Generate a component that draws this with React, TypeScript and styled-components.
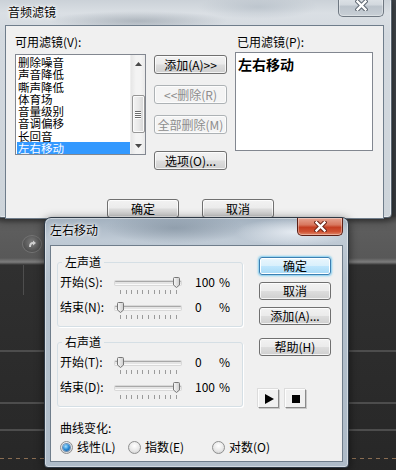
import React from "react";
import styled, { createGlobalStyle, css } from "styled-components";

const FONT = `"Noto Sans CJK SC", "Noto Sans CJK JP", "Noto Sans", sans-serif`;

const GlobalStyle = createGlobalStyle`
  html, body { margin: 0; padding: 0; }
  body { background: #2a2a2a; font-family: ${FONT}; font-size: 12px; color: #000; overflow: hidden; }
  * { box-sizing: border-box; }
`;

/* ---------- desktop ---------- */
const Desktop = styled.div`
  position: relative;
  width: 396px;
  height: 470px;
  overflow: hidden;
  background: linear-gradient(
    180deg,
    #44494e 0px,
    #3a3e42 212px,
    #3b3b3b 216px,
    #4a4a4a 218px,
    #5e5e5e 224px,
    #585858 258px,
    #7d7d7d 262px,
    #303030 265px,
    #272727 470px
  );
`;

const Stripe = styled.div<{ $y: number; $h?: number; $c: string; $dashed?: boolean }>`
  position: absolute;
  left: 0;
  right: 0;
  top: ${(p) => p.$y}px;
  height: ${(p) => p.$h ?? 2}px;
  background: ${(p) =>
    p.$dashed ? `repeating-linear-gradient(90deg, ${p.$c} 0 4px, transparent 4px 8px)` : p.$c};
`;

const VLine = styled.div<{ $x: number; $y: number; $h: number }>`
  position: absolute;
  left: ${(p) => p.$x}px;
  top: ${(p) => p.$y}px;
  width: 1px;
  height: ${(p) => p.$h}px;
  background: #4e4e4e;
`;

const Knob = styled.div`
  position: absolute;
  left: 22px;
  top: 235px;
  width: 20px;
  height: 18px;
  border-radius: 50%;
  border: 1px solid #747474;
  background: radial-gradient(circle at 50% 40%, #7c7c7c, #4d4d4d 75%);
  display: flex;
  align-items: center;
  justify-content: center;
`;

/* ---------- window chrome ---------- */
const Window = styled.div<{ $x: number; $y: number; $w: number; $h: number; $frame: number; $active?: boolean }>`
  position: absolute;
  left: ${(p) => p.$x}px;
  top: ${(p) => p.$y}px;
  width: ${(p) => p.$w}px;
  height: ${(p) => p.$h}px;
  display: flex;
  flex-direction: column;
  padding: 0 ${(p) => p.$frame}px ${(p) => p.$frame}px;
  border: 1px solid ${(p) => (p.$active ? "#2e3945" : "#59646f")};
  border-radius: 7px 7px 4px 4px;
  box-shadow: inset 0 0 0 1px rgba(255, 255, 255, 0.45), 0 2px 10px rgba(0, 0, 0, 0.55);
  background: ${(p) =>
    p.$active
      ? `radial-gradient(ellipse 60px 14px at 250px 14px, rgba(235,240,246,0.9), transparent),
         radial-gradient(ellipse 70px 16px at 130px 10px, rgba(120,135,150,0.55), transparent),
         linear-gradient(180deg, #a3b1bf 0px, #bfcad5 22px, #b3c0cc 60px, #aebbc8 100%)`
      : `radial-gradient(ellipse 90px 10px at 140px 26px, rgba(140,150,160,0.55), transparent),
         radial-gradient(ellipse 60px 12px at 260px 12px, rgba(175,185,195,0.6), transparent),
         linear-gradient(180deg, #c5ccd3 0px, #dadfe4 18px, #d3d9df 40px, #cdd4da 100%)`};
`;

const TitleBar = styled.div<{ $h: number }>`
  flex: none;
  height: ${(p) => p.$h}px;
  display: flex;
  align-items: flex-start;
  justify-content: space-between;
`;

const Title = styled.div<{ $top: number; $left: number }>`
  margin: ${(p) => p.$top}px 0 0 ${(p) => p.$left}px;
  font-size: 12px;
  line-height: 14px;
  color: #000;
  text-shadow: 0 0 5px #fff, 0 0 3px rgba(255, 255, 255, 0.9), 0 0 1px #fff;
`;

const CloseBtn = styled.div<{ $h: number; $active?: boolean }>`
  width: 46px;
  height: ${(p) => p.$h}px;
  border: 1px solid ${(p) => (p.$active ? "#5b1f15" : "#6f7882")};
  border-top: none;
  border-radius: 0 0 5px 5px;
  display: flex;
  align-items: center;
  justify-content: center;
  box-shadow: inset 0 0 0 1px rgba(255, 255, 255, 0.35);
  background: ${(p) =>
    p.$active
      ? "linear-gradient(180deg, #e6a390 0%, #d8785f 40%, #c43e22 55%, #cf5233 80%, #e08a6c 100%)"
      : "linear-gradient(180deg, #e4e8ec 0%, #d3d9df 45%, #bcc4cc 55%, #c8cfd6 100%)"};
`;

const Client = styled.div<{ $pad: string }>`
  flex: 1;
  display: flex;
  flex-direction: column;
  padding: ${(p) => p.$pad};
  background: #f0f0f0;
  border: 1px solid #6f7d8b;
`;

/* ---------- controls ---------- */
const Btn = styled.button<{ $w?: number; $h?: number; $off?: boolean; $default?: boolean }>`
  flex: none;
  width: ${(p) => p.$w ?? 73}px;
  height: ${(p) => p.$h ?? 19}px;
  padding: 0;
  margin: 0;
  display: flex;
  align-items: center;
  justify-content: center;
  font-family: ${FONT};
  font-size: 12px;
  line-height: 14px;
  color: #000;
  border: 1px solid #707070;
  border-radius: 3px;
  background: linear-gradient(180deg, #f2f2f2 0%, #ebebeb 48%, #dddddd 52%, #cfcfcf 100%);
  box-shadow: inset 0 0 0 1px rgba(255, 255, 255, 0.75);
  ${(p) =>
    p.$off &&
    css`
      color: #8d8d8d;
      border-color: #adb2b5;
      background: #f4f4f4;
      box-shadow: inset 0 0 0 1px #fcfcfc;
    `}
  ${(p) =>
    p.$default &&
    css`
      border-color: #3c7fb1;
      background: linear-gradient(180deg, #eaf6fd 0%, #d9f0fc 48%, #bee6fd 52%, #a7d9f5 100%);
      box-shadow: inset 0 0 0 1px #fff, 0 0 2px 1px rgba(80, 190, 240, 0.7);
    `}
`;

const IconBtn = styled.div`
  width: 21px;
  height: 19px;
  display: flex;
  align-items: center;
  justify-content: center;
  background: #f0f0f0;
  border: 1px solid;
  border-color: #fdfdfd #8a8a8a #8a8a8a #fdfdfd;
  box-shadow: 1px 1px 0 #c9c9c9, -1px -1px 0 #dcdcdc;
`;

const Label = styled.div<{ $indent?: number }>`
  font-size: 12px;
  line-height: 14px;
  padding-left: ${(p) => p.$indent ?? 0}px;
  white-space: nowrap;
`;

/* ---------- window 1 parts ---------- */
const TopRow = styled.div`
  display: flex;
  align-items: flex-start;
`;

const Column = styled.div<{ $ml?: number; $pt?: number }>`
  display: flex;
  flex-direction: column;
  margin-left: ${(p) => p.$ml ?? 0}px;
  padding-top: ${(p) => p.$pt ?? 0}px;
`;

const ListBox = styled.div`
  margin-top: 5px;
  width: 131px;
  height: 101px;
  display: flex;
  background: #fff;
  border: 1px solid #828790;
`;

const ListItems = styled.ul`
  flex: 1;
  margin: 0;
  padding: 1px 0 0 1px;
  list-style: none;
`;

const ListItem = styled.li<{ $selected?: boolean }>`
  height: 12.25px;
  line-height: 12.25px;
  font-size: 11.5px;
  padding-left: 1px;
  white-space: nowrap;
  color: ${(p) => (p.$selected ? "#fff" : "#000")};
  background: ${(p) => (p.$selected ? "#3399ff" : "transparent")};
`;

const ScrollBar = styled.div`
  flex: none;
  width: 15px;
  display: flex;
  flex-direction: column;
  align-items: center;
  background: linear-gradient(90deg, #e6e6e6, #f3f3f3 35%, #f3f3f3 70%, #e9e9e9);
  border-left: 1px solid #efefef;
`;

const ScrollArrow = styled.div`
  height: 17px;
  width: 100%;
  display: flex;
  align-items: center;
  justify-content: center;
`;

const ScrollTrack = styled.div`
  flex: 1;
  width: 100%;
  display: flex;
  flex-direction: column;
  align-items: center;
`;

const ScrollThumb = styled.div`
  width: 13px;
  height: 38px;
  border: 1px solid #979797;
  border-radius: 2px;
  background: linear-gradient(90deg, #f3f3f3 0%, #e8e8e8 50%, #d6d6d6 100%);
  box-shadow: inset 0 0 0 1px #fafafa;
  display: flex;
  flex-direction: column;
  align-items: center;
  justify-content: center;
  gap: 1px;
`;

const Grip = styled.span`
  width: 6px;
  height: 1px;
  background: #6c6c6c;
  box-shadow: 0 1px 0 #fff;
`;

const UsedBox = styled.div`
  margin-top: 3px;
  width: 138px;
  height: 99px;
  padding: 2px 2px;
  background: #fff;
  border: 1px solid #828790;
  font-size: 14px;
  line-height: 18px;
  font-weight: bold;
`;

const BtnStack = styled.div`
  display: flex;
  flex-direction: column;
`;

const Spacer = styled.div<{ $h: number }>`
  flex: none;
  height: ${(p) => p.$h}px;
`;

const BottomRow = styled.div`
  display: flex;
  gap: 23px;
  margin: 29px 0 0 92px;
`;

/* ---------- window 2 parts ---------- */
const MainRow = styled.div`
  display: flex;
  align-items: flex-start;
`;

const LeftCol = styled.div`
  width: 186px;
  display: flex;
  flex-direction: column;
  gap: 8px;
`;

const Group = styled.fieldset`
  margin: 0;
  min-width: 0;
  padding: 7px 0 0 2px;
  border: 1px solid #d5dfe5;
  border-radius: 3px;
  box-shadow: 1px 1px 0 #fff;
`;

const GroupLegend = styled.legend`
  margin-left: 2px;
  padding: 0 3px;
  font-size: 12px;
  line-height: 14px;
`;

const SliderRow = styled.div`
  display: grid;
  grid-template-columns: 55px 66px 14px 24px auto;
  align-items: start;
  height: 25px;
`;

const RowText = styled.span`
  font-size: 12px;
  line-height: 12px;
  white-space: nowrap;
`;

const SliderBox = styled.div`
  position: relative;
  width: 66px;
  height: 20px;
  margin-top: 1px;
`;

const SliderTrack = styled.div`
  position: absolute;
  left: 0;
  right: 0;
  top: 4px;
  height: 4px;
  border-radius: 1px;
  background: #e4e4e4;
  border-top: 1px solid #a8a8a8;
  border-bottom: 1px solid #fafafa;
  box-shadow: 0 0 0 1px #d9d9d9;
`;

const SliderTicks = styled.div`
  position: absolute;
  left: 5px;
  width: 57px;
  top: 13px;
  height: 4px;
  background: repeating-linear-gradient(90deg, #9b9b9b 0 1px, transparent 1px 5.6px);
`;

const ThumbHolder = styled.div`
  position: absolute;
  top: 0;
  width: 7px;
  height: 11px;
  display: flex;
`;

const RightCol = styled.div`
  margin-left: 16px;
  padding-top: 2px;
  display: flex;
  flex-direction: column;
`;

const PlayRow = styled.div`
  display: flex;
  gap: 6px;
  margin-left: -1px;
`;

const CurveSection = styled.div`
  margin: 13px 0 0 3px;
  display: flex;
  flex-direction: column;
  gap: 5px;
`;

const RadioRow = styled.div`
  display: grid;
  grid-template-columns: 68px 84px auto;
  align-items: center;
`;

const RadioItem = styled.label`
  display: flex;
  align-items: center;
  gap: 4px;
  font-size: 12px;
  line-height: 14px;
  white-space: nowrap;
`;

const RadioCircle = styled.span<{ $checked?: boolean }>`
  flex: none;
  width: 13px;
  height: 13px;
  border-radius: 50%;
  border: 1px solid #8e8f8f;
  background: radial-gradient(circle at 50% 35%, #ffffff 0%, #e8e8e8 55%, #c9c9c9 100%);
  display: flex;
  align-items: center;
  justify-content: center;
  &::after {
    content: "";
    display: ${(p) => (p.$checked ? "block" : "none")};
    width: 7px;
    height: 7px;
    border-radius: 50%;
    background: radial-gradient(circle at 40% 35%, #a6e1ff 0%, #2a8ad4 50%, #0c4d8f 100%);
    box-shadow: 0 0 0 1px rgba(25, 80, 140, 0.6);
  }
`;

/* ---------- drawings ---------- */
const CloseX = ({ dark }: { dark: string }) => (
  <svg width="13" height="11" viewBox="0 0 13 11">
    <path d="M2.5 1.5 L10.5 9.5 M10.5 1.5 L2.5 9.5" stroke={dark} strokeWidth="4.4" strokeLinecap="square" />
    <path d="M2.5 1.5 L10.5 9.5 M10.5 1.5 L2.5 9.5" stroke="#fff" strokeWidth="2.4" strokeLinecap="square" />
  </svg>
);

const Arrow = ({ up }: { up?: boolean }) => (
  <svg width="7" height="4" viewBox="0 0 7 4">
    <path d={up ? "M0 4 L3.5 0 L7 4 Z" : "M0 0 L7 0 L3.5 4 Z"} fill="#4a4a4a" />
  </svg>
);

const Thumb = () => (
  <svg width="7" height="11" viewBox="0 0 7 11">
    <defs>
      <linearGradient id="thumbG" x1="0" x2="1" y1="0" y2="0">
        <stop offset="0" stopColor="#f7f7f7" />
        <stop offset="1" stopColor="#cdcdcd" />
      </linearGradient>
    </defs>
    <path d="M0.5 1.5 Q0.5 0.5 1.5 0.5 H5.5 Q6.5 0.5 6.5 1.5 V8 L3.5 10.5 L0.5 8 Z" fill="url(#thumbG)" stroke="#777" />
  </svg>
);

const Slider = ({ value }: { value: number }) => (
  <SliderBox>
    <SliderTrack />
    <SliderTicks />
    <ThumbHolder style={{ left: `${2 + value * 0.56}px` }}>
      <Thumb />
    </ThumbHolder>
  </SliderBox>
);

const Row = ({ label, value }: { label: string; value: number }) => (
  <SliderRow>
    <RowText>{label}</RowText>
    <Slider value={value} />
    <span />
    <RowText>{value}</RowText>
    <RowText>%</RowText>
  </SliderRow>
);

const Radio = ({ label, checked }: { label: string; checked?: boolean }) => (
  <RadioItem>
    <RadioCircle $checked={checked} />
    {label}
  </RadioItem>
);

const filters = ["删除噪音", "声音降低", "嘶声降低", "体育场", "音量级别", "音调偏移", "长回音", "左右移动"];

export default function App() {
  return (
    <>
      <GlobalStyle />
      <Desktop>
        <Stripe $y={350} $c="#4d4d4d" />
        <Stripe $y={402} $c="#4d4d4d" />
        <Stripe $y={429} $c="#4d4d4d" />
        <Stripe $y={458} $h={1} $c="#8a6d52" $dashed />
        <VLine $x={23} $y={265} $h={30} />
        <Knob>
          <svg width="10" height="9" viewBox="0 0 10 9">
            <path d="M2 7 Q2 2 6 2 L6 0.5 L9 3 L6 5.5 L6 4 Q4 4 4 7 Z" fill="#cfcfcf" />
          </svg>
        </Knob>

        {/* 音频滤镜 */}
        <Window $x={-3} $y={-6} $w={395} $h={224} $frame={7}>
          <TitleBar $h={30}>
            <Title $top={10} $left={3}>音频滤镜</Title>
            <CloseBtn $h={22}>
              <CloseX dark="#5d6670" />
            </CloseBtn>
          </TitleBar>
          <Client $pad="9px 0 0 9px">
            <TopRow>
              <Column>
                <Label>可用滤镜(V):</Label>
                <ListBox>
                  <ListItems>
                    {filters.map((f, i) => (
                      <ListItem key={f} $selected={i === filters.length - 1}>
                        {f}
                      </ListItem>
                    ))}
                  </ListItems>
                  <ScrollBar>
                    <ScrollArrow>
                      <Arrow up />
                    </ScrollArrow>
                    <ScrollTrack>
                      <Spacer $h={23} />
                      <ScrollThumb>
                        <Grip />
                        <Grip />
                        <Grip />
                        <Grip />
                      </ScrollThumb>
                    </ScrollTrack>
                    <ScrollArrow>
                      <Arrow />
                    </ScrollArrow>
                  </ScrollBar>
                </ListBox>
              </Column>
              <Column $ml={8} $pt={20}>
                <BtnStack>
                  <Btn>添加(A)&gt;&gt;</Btn>
                  <Spacer $h={11} />
                  <Btn $off>&lt;&lt;删除(R)</Btn>
                  <Spacer $h={11} />
                  <Btn $off>全部删除(M)</Btn>
                  <Spacer $h={17} />
                  <Btn>选项(O)...</Btn>
                </BtnStack>
              </Column>
              <Column $ml={8}>
                <Label $indent={2}>已用滤镜(P):</Label>
                <UsedBox>左右移动</UsedBox>
              </Column>
            </TopRow>
            <BottomRow>
              <Btn $w={72}>确定</Btn>
              <Btn $w={72}>取消</Btn>
            </BottomRow>
          </Client>
        </Window>

        {/* 左右移动 */}
        <Window $x={44} $y={217} $w={305} $h={251} $frame={5} $active>
          <TitleBar $h={27}>
            <Title $top={5} $left={0}>左右移动</Title>
            <CloseBtn $h={18} $active>
              <CloseX dark="#6b2416" />
            </CloseBtn>
          </TitleBar>
          <Client $pad="9px 0 0 6px">
            <MainRow>
              <LeftCol>
                <Group>
                  <GroupLegend>左声道</GroupLegend>
                  <Row label="开始(S):" value={100} />
                  <Row label="结束(N):" value={0} />
                </Group>
                <Group>
                  <GroupLegend>右声道</GroupLegend>
                  <Row label="开始(T):" value={0} />
                  <Row label="结束(D):" value={100} />
                </Group>
              </LeftCol>
              <RightCol>
                <Btn $w={72} $h={18} $default>确定</Btn>
                <Spacer $h={7} />
                <Btn $w={72} $h={18}>取消</Btn>
                <Spacer $h={7} />
                <Btn $w={72} $h={18}>添加(A)...</Btn>
                <Spacer $h={13} />
                <Btn $w={72} $h={18}>帮助(H)</Btn>
                <Spacer $h={33} />
                <PlayRow>
                  <IconBtn>
                    <svg width="10" height="10" viewBox="0 0 10 10">
                      <path d="M1 0 L10 5 L1 10 Z" fill="#000" />
                    </svg>
                  </IconBtn>
                  <IconBtn>
                    <svg width="8" height="8" viewBox="0 0 8 8">
                      <rect width="8" height="8" fill="#000" />
                    </svg>
                  </IconBtn>
                </PlayRow>
              </RightCol>
            </MainRow>
            <CurveSection>
              <Label>曲线变化:</Label>
              <RadioRow>
                <Radio label="线性(L)" checked />
                <Radio label="指数(E)" />
                <Radio label="对数(O)" />
              </RadioRow>
            </CurveSection>
          </Client>
        </Window>
      </Desktop>
    </>
  );
}
